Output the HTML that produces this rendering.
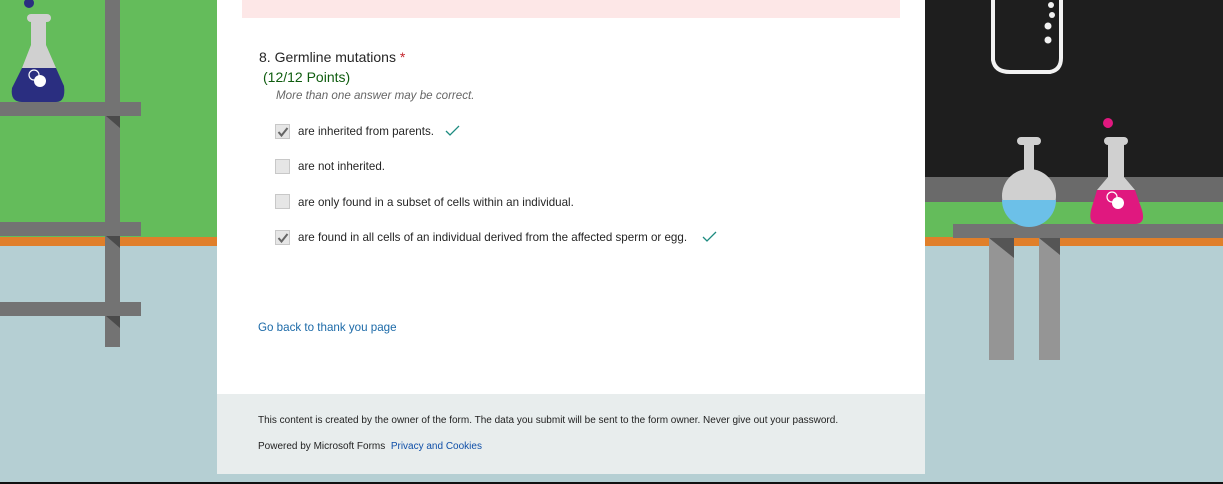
<!DOCTYPE html>
<html><head><meta charset="utf-8"><style>
*{margin:0;padding:0;box-sizing:border-box}
body{width:1223px;height:484px;overflow:hidden;position:relative;background:#b5cfd3;font-family:"Segoe UI","Liberation Sans",sans-serif}
.a{position:absolute}
.card{left:217px;top:0;width:708px;height:474px;background:#fff}
.foot{left:217px;top:394px;width:708px;height:80px;background:#e8eded;font-size:10px;color:#222}
.q{font-size:14px;color:#252525}
.opt{font-size:11.6px;color:#252525}
.cb{position:absolute;width:15px;height:15px;background:#e6e6e6;border:1px solid #c8c8c8}
</style></head><body>
<div class="a" style="left:0;top:0;width:217px;height:237px;background:#64bc5b"></div>
<div class="a" style="left:0;top:237px;width:217px;height:9px;background:#e07f2a"></div>
<div class="a" style="left:105px;top:0;width:15px;height:347px;background:#737373"></div>
<div class="a" style="left:0;top:102px;width:141px;height:14px;background:#737373"></div>
<div class="a" style="left:0;top:222px;width:141px;height:14px;background:#737373"></div>
<div class="a" style="left:0;top:302px;width:141px;height:14px;background:#737373"></div>
<svg class="a" style="left:0;top:0" width="140" height="330">
<polygon points="106,116 120,116 120,128" fill="#4b4b4b"/>
<polygon points="106,236 120,236 120,248" fill="#4b4b4b"/>
<polygon points="106,316 120,316 120,328" fill="#4b4b4b"/>
<circle cx="29" cy="3" r="5" fill="#2a2e80"/>
<rect x="27" y="14" width="24" height="8" rx="4" fill="#d0d0d0"/>
<path d="M31,20 H46 V45 L56,68 H22 L31,45 Z" fill="#d0d0d0"/>
<path d="M22,68 H56 L64,86 Q66,102 56,102 H22 Q10,102 12,88 Z" fill="#2a2e80"/>
<circle cx="34" cy="75" r="5" fill="none" stroke="#fff" stroke-width="1.2"/>
<circle cx="40" cy="81" r="6" fill="#fff"/>
</svg>
<div class="a" style="left:925px;top:0;width:298px;height:177px;background:#1e1e1e"></div>
<div class="a" style="left:925px;top:177px;width:298px;height:25px;background:#6a6a6a"></div>
<div class="a" style="left:925px;top:202px;width:298px;height:35px;background:#64bc5b"></div>
<div class="a" style="left:925px;top:237px;width:298px;height:9px;background:#e07f2a"></div>
<div class="a" style="left:953px;top:224px;width:270px;height:14px;background:#737373"></div>
<div class="a" style="left:989px;top:238px;width:25px;height:122px;background:#959595"></div>
<div class="a" style="left:1039px;top:238px;width:21px;height:122px;background:#959595"></div>
<svg class="a" style="left:925px;top:0" width="298" height="260">
<polygon points="64,238 89,238 89,258" fill="#555"/>
<polygon points="114,238 135,238 135,255" fill="#555"/>
<path d="M68,0 V60 Q70,72 85,72 H125 Q136,70 136,58 V0" fill="none" stroke="#f2f2f2" stroke-width="4"/>
<circle cx="126" cy="5" r="3" fill="#f2f2f2"/><circle cx="127" cy="15" r="3" fill="#f2f2f2"/>
<circle cx="123" cy="26" r="3.5" fill="#f2f2f2"/><circle cx="123" cy="40" r="3.5" fill="#f2f2f2"/>
<rect x="92" y="137" width="24" height="8" rx="4" fill="#d0d0d0"/>
<rect x="99" y="142" width="10" height="30" fill="#d0d0d0"/>
<circle cx="104" cy="196" r="27" fill="#d0d0d0"/>
<path d="M77,200 H131 A27,27 0 0 1 77,200 Z" fill="#6cc0e8"/>
<circle cx="183" cy="123" r="5" fill="#e0187f"/>
<rect x="179" y="137" width="24" height="8" rx="4" fill="#d0d0d0"/>
<path d="M183,143 H199 V177 L210,190 H172 L183,177 Z" fill="#d0d0d0"/>
<path d="M172,190 H210 L217,210 Q221,224 210,224 H173 Q163,224 166,210 Z" fill="#e0187f"/>
<circle cx="187" cy="197" r="5" fill="none" stroke="#fff" stroke-width="1.2"/>
<circle cx="193" cy="203" r="6" fill="#fff"/>
</svg>
<div class="a" style="left:0;top:482px;width:1223px;height:2px;background:#111"></div>
<div class="a card"></div>
<div class="a" style="left:242px;top:0;width:658px;height:18px;background:#fde7e7"></div>
<div class="a q" style="left:259px;top:49px">8. Germline mutations <span style="color:#c4262e">*</span></div>
<div class="a q" style="left:263px;top:69px;color:#0f5c0f">(12/12 Points)</div>
<div class="a" style="left:276px;top:89px;font-size:11.6px;font-style:italic;color:#666">More than one answer may be correct.</div>

<div class="cb" style="left:275px;top:124px"></div>
<svg class="a" style="left:277px;top:126px" width="12" height="12"><path d="M1.5,6 L4.5,9.5 L10.5,2" fill="none" stroke="#666" stroke-width="2"/></svg>
<div class="a opt" style="left:298px;top:125px">are inherited from parents.</div>
<svg class="a" style="left:445px;top:125px" width="15" height="12"><path d="M1,6 L5,10 L14,1" fill="none" stroke="#1d8b80" stroke-width="1.3"/></svg>

<div class="cb" style="left:275px;top:159px"></div>
<div class="a opt" style="left:298px;top:160px">are not inherited.</div>

<div class="cb" style="left:275px;top:194px"></div>
<div class="a opt" style="left:298px;top:196px">are only found in a subset of cells within an individual.</div>

<div class="cb" style="left:275px;top:230px"></div>
<svg class="a" style="left:277px;top:232px" width="12" height="12"><path d="M1.5,6 L4.5,9.5 L10.5,2" fill="none" stroke="#666" stroke-width="2"/></svg>
<div class="a opt" style="left:298px;top:231px">are found in all cells of an individual derived from the affected sperm or egg.</div>
<svg class="a" style="left:702px;top:231px" width="15" height="12"><path d="M1,6 L5,10 L14,1" fill="none" stroke="#1d8b80" stroke-width="1.3"/></svg>

<div class="a" style="left:258px;top:321px;font-size:11.6px;color:#1c6aa8">Go back to thank you page</div>

<div class="a foot"></div>
<div class="a" style="left:258px;top:415px;font-size:10px;color:#222">This content is created by the owner of the form. The data you submit will be sent to the form owner. Never give out your password.</div>
<div class="a" style="left:258px;top:441px;font-size:10px;color:#222">Powered by Microsoft Forms&nbsp; <span style="color:#0f4fa8">Privacy and Cookies</span></div>
</body></html>
